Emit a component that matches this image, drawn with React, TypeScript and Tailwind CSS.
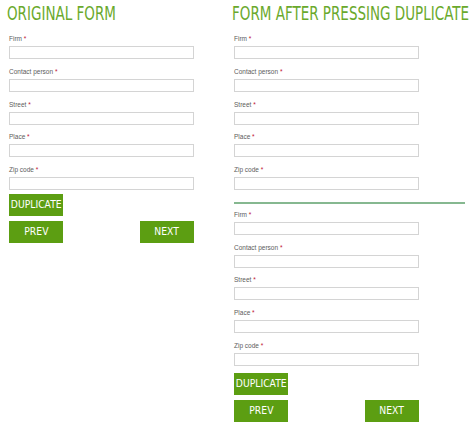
import React from "react";

const fields = ["Firm", "Contact person", "Street", "Place", "Zip code"];

const Field = ({ label }: { label: string }) => {
  return (
    <div className="mb-[7.75px] flex flex-col">
      <p className="h-[10px] text-[6.5px] leading-[10px] text-[#5c5c5c]">
        {label} <span className="text-[#c0152f]">*</span>
      </p>
      <div className="mt-[2px] h-[13px] w-[185px] border border-[#d4d4d4] bg-white" />
    </div>
  );
};

const Btn = ({ children }: { children: React.ReactNode }) => {
  return (
    <button
      type="button"
      className="flex h-[22px] w-[54px] items-center justify-center whitespace-nowrap bg-[#5c9e12] text-[11px] text-white"
      style={{ fontFamily: '"DejaVu Sans", sans-serif' }}
    >
      <span className="inline-block scale-x-[0.84]">{children}</span>
    </button>
  );
};

const Form = ({ gap = 4 }: { gap?: number }) => {
  return (
    <div className="flex flex-col">
      {fields.map((f) => (
        <Field key={f} label={f} />
      ))}
      <div
        className={
          gap === 4
            ? "-mt-[3.75px] flex w-[185px] flex-col gap-[5px]"
            : "-mt-[0.75px] flex w-[185px] flex-col gap-[5px]"
        }
      >
        <Btn>DUPLICATE</Btn>
        <div className="flex justify-between">
          <Btn>PREV</Btn>
          <Btn>NEXT</Btn>
        </div>
      </div>
    </div>
  );
};

const Title = ({ children }: { children: React.ReactNode }) => {
  return (
    <h1
      className="-ml-[2px] mb-[8px] h-[26px] origin-left scale-x-[0.71] whitespace-nowrap text-[19px] leading-[26px] text-[#6aa92c]"
      style={{ fontFamily: '"DejaVu Sans", sans-serif' }}
    >
      {children}
    </h1>
  );
};

const App = () => {
  return (
    <div
      className="flex h-[430px] w-[474px] overflow-hidden bg-white"
      style={{ fontFamily: '"Liberation Sans", Arial, sans-serif' }}
    >
      <div className="flex w-[225px] shrink-0 flex-col pl-[9px]">
        <Title>ORIGINAL FORM</Title>
        <Form />
      </div>
      <div className="flex min-w-0 flex-1 flex-col pl-[9px]">
        <Title>FORM AFTER PRESSING DUPLICATE</Title>
        {fields.map((f) => (
          <Field key={f} label={f} />
        ))}
        <div className="mb-[6.25px] mt-[4.25px] h-[1.5px] w-[231px] bg-[#86b890]" />
        <Form gap={7} />
      </div>
    </div>
  );
};

export default App;
